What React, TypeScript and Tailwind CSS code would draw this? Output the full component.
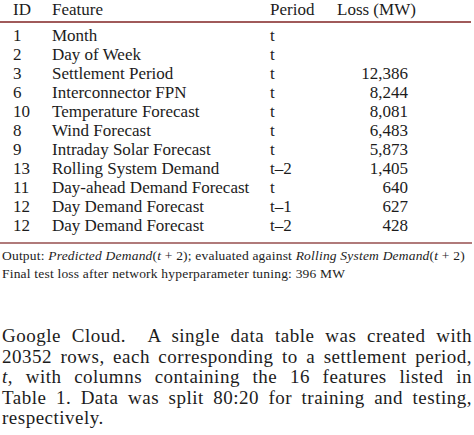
import React from "react";

const rows: [string, string, string, string][] = [
  ["1", "Month", "t", ""],
  ["2", "Day of Week", "t", ""],
  ["3", "Settlement Period", "t", "12,386"],
  ["6", "Interconnector FPN", "t", "8,244"],
  ["10", "Temperature Forecast", "t", "8,081"],
  ["8", "Wind Forecast", "t", "6,483"],
  ["9", "Intraday Solar Forecast", "t", "5,873"],
  ["13", "Rolling System Demand", "t\u20132", "1,405"],
  ["11", "Day-ahead Demand Forecast", "t", "640"],
  ["12", "Day Demand Forecast", "t\u20131", "627"],
  ["12", "Day Demand Forecast", "t\u20132", "428"],
];

const serif = "font-['Liberation_Serif',serif]";
const jline = "text-justify [text-align-last:justify] whitespace-nowrap";

export default function App() {
  return (
    <div className={`w-[474px] h-[435px] bg-white text-[#1c1c1c] overflow-hidden ${serif}`}>
      <div className="text-[17px] leading-[19px]">
        <div className="flex h-[23px] items-start border-b-2 border-[#a05a5a] w-[471px]">
          <span className="w-[52px] pl-[13px]">ID</span>
          <span className="w-[218px]">Feature</span>
          <span className="w-[67px]">Period</span>
          <span>Loss (MW)</span>
        </div>
        <div className="pt-[3px] pb-[7px] border-b-2 border-[#b07a7a] w-[472px]">
          {rows.map(([id, f, p, l], i) => (
            <div key={i} className="flex h-[19px]">
              <span className="w-[52px] pl-[13px]">{id}</span>
              <span className="w-[218px] whitespace-nowrap">{f}</span>
              <span className="w-[67px]">{p}</span>
              <span className="w-[71px] text-right">{l}</span>
            </div>
          ))}
        </div>
      </div>
      <div className="pl-[2px] pt-[3px] text-[13.5px] tracking-[0.2px] leading-[18px] whitespace-nowrap">
        <div>
          Output: <i>Predicted Demand</i>(<i>t</i> + 2); evaluated against <i>Rolling System Demand</i>(<i>t</i> + 2)
        </div>
        <div>Final test loss after network hyperparameter tuning: 396 MW</div>
      </div>
      <div className="mt-[43px] pl-[2px] pr-[2px] text-[19px] tracking-[0.5px] leading-[20.5px]">
        <div className={jline}>Google Cloud. &nbsp;A single data table was created with</div>
        <div className={jline}>20352 rows, each corresponding to a settlement period,</div>
        <div className={jline}><i>t</i>, with columns containing the 16 features listed in</div>
        <div className={jline}>Table 1. Data was split 80:20 for training and testing,</div>
        <div>respectively.</div>
      </div>
    </div>
  );
}
